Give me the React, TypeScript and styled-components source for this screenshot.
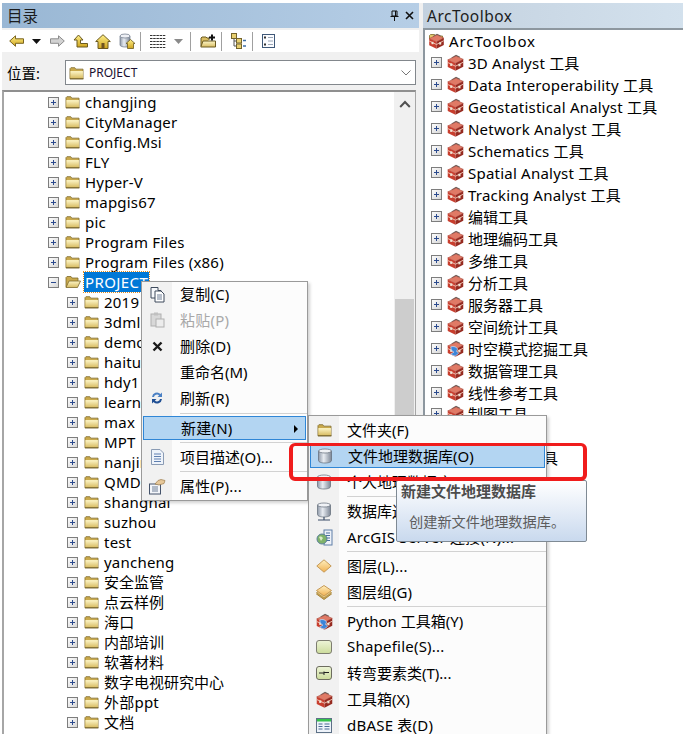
import React from "react";
import styled, { createGlobalStyle } from "styled-components";

const Global = createGlobalStyle`
  html, body { margin: 0; padding: 0; background: #fff; }
  * { box-sizing: border-box; }
`;

const FONT = `"Noto Sans", "Noto Sans CJK SC", sans-serif`;

const latinSpacing = (text: string) => (/[\u4e00-\u9fff]{3,}/.test(text) ? 0 : 0.22);

const Page = styled.div`
  position: relative;
  width: 683px;
  height: 734px;
  overflow: hidden;
  display: flex;
  background: #fff;
  padding: 3px 0 0 2px;
  font-family: ${FONT};
  font-size: 15px;
  color: #000;
`;
const LeftPane = styled.section`
  width: 421px;
  flex: none;
  display: flex;
  flex-direction: column;
  background: #f0f0f0;
  padding-right: 4px;
`;
const RightPane = styled.section`
  flex: 1;
  display: flex;
  flex-direction: column;
`;
const TitleBar = styled.header<{ $from: string; $to: string; $pad: number }>`
  height: 25px;
  flex: none;
  display: flex;
  align-items: center;
  padding: 0 5px 0 ${p => p.$pad}px;
  background: linear-gradient(90deg, ${p => p.$from}, ${p => p.$to});
  font-size: 15.5px;
  color: #1c1c1c;
`;
const TitleText = styled.span<{ $ls?: number }>`
  flex: 1;
  letter-spacing: ${p => p.$ls ?? 0}px;
`;
const TitleBtn = styled.svg`
  margin-left: 6px;
  flex: none;
`;
const Toolbar = styled.div`
  height: 22px;
  margin-top: 2px;
  flex: none;
  display: flex;
  align-items: center;
  background: #fff;
  padding-left: 7px;
`;
const ToolIcon = styled.svg<{ $ml?: number }>`
  flex: none;
  margin-left: ${p => p.$ml ?? 0}px;
`;
const ToolSep = styled.span<{ $ml: number }>`
  width: 1px;
  height: 19px;
  flex: none;
  margin-left: ${p => p.$ml}px;
  background: #a0a0a0;
`;
const LocationRow = styled.div`
  height: 38px;
  flex: none;
  display: flex;
  align-items: center;
  padding: 3px 3px 0 5px;
`;
const LocationLabel = styled.label`
  width: 58px;
  flex: none;
  font-size: 14.5px;
`;
const Combo = styled.div`
  flex: 1;
  height: 25px;
  display: flex;
  align-items: center;
  gap: 5px;
  padding: 0 4px 0 3px;
  background: #fff;
  border: 1px solid #82878c;
  font-size: 12px;
  color: #1a1030;
`;
const ComboText = styled.span`
  flex: 1;
`;
const TreePane = styled.div`
  flex: 1;
  min-height: 0;
  display: flex;
  background: #fff;
  border-top: 2px solid #8f8f8f;
  border-left: 2px solid #a6a6a6;
  border-right: 1px solid #a6a6a6;
  margin-right: 3px;
`;
const TreeList = styled.ul`
  flex: 1;
  margin: 0;
  padding: 0;
  list-style: none;
  min-width: 0;
`;
const TreeRow = styled.li<{ $level: number }>`
  height: 20px;
  display: flex;
  align-items: center;
  padding-left: ${p => 44 + p.$level * 19}px;
  white-space: nowrap;
`;
const Expander = styled.svg`
  flex: none;
`;
const RowFolder = styled.svg`
  flex: none;
  margin-left: 6px;
`;
const RowLabel = styled.span<{ $selected?: boolean; $ls: number }>`
  margin-left: ${p => (p.$selected ? 3 : 5)}px;
  line-height: 20px;
  padding: 0 ${p => (p.$selected ? 1 : 0)}px;
  letter-spacing: ${p => p.$ls}px;
  background: ${p => (p.$selected ? "#0078d7" : "transparent")};
  color: ${p => (p.$selected ? "#fff" : "#000")};
  outline: ${p => (p.$selected ? "1px dotted #e08a20" : "none")};
`;
const Scroll = styled.div`
  width: 21px;
  flex: none;
  background: #f0f0f0;
  display: flex;
  flex-direction: column;
  align-items: stretch;
`;
const ScrollArrow = styled.div`
  height: 24px;
  display: flex;
  align-items: center;
  justify-content: center;
`;
const ScrollThumb = styled.div`
  margin: 183px 1px 0;
  height: 420px;
  background: #cdcdcd;
`;
const ToolTreeFrame = styled.div`
  flex: 1;
  background: #fff;
  border-top: 2px solid #8d979f;
  border-left: 2px solid #8d979f;
`;
const ToolRoot = styled.div`
  height: 22px;
  display: flex;
  align-items: center;
  gap: 4px;
  padding-left: 3px;
`;
const RootLabel = styled.span`
  letter-spacing: 0.9px;
`;
const ToolRow = styled.div`
  height: 21.95px;
  display: flex;
  align-items: center;
  padding-left: 6px;
  white-space: nowrap;
`;
const ToolIconBox = styled.svg`
  flex: none;
  margin-left: 5px;
`;
const ToolLabel = styled.span<{ $ls: number }>`
  margin-left: 4px;
  letter-spacing: ${p => p.$ls}px;
`;
const Menu = styled.div<{ $left: number; $top: number; $width: number; $pad: number }>`
  position: absolute;
  left: ${p => p.$left}px;
  top: ${p => p.$top}px;
  width: ${p => p.$width}px;
  padding: ${p => p.$pad}px 0 1px;
  border: 1px solid #9a9a9a;
  background: linear-gradient(90deg, #f1f1f1 30px, #fcfcfc 30px);
  box-shadow: 2px 2px 3px rgba(0, 0, 0, 0.18);
`;
const MenuRow = styled.div<{ $active?: boolean; $disabled?: boolean; $h: number }>`
  position: relative;
  height: ${p => p.$h}px;
  display: flex;
  align-items: center;
  margin: ${p => (p.$active ? "1px 1px" : "0")};
  padding-left: ${p => (p.$active ? 4 : 5)}px;
  border: ${p => (p.$active ? "1px solid #2f86d6" : "none")};
  background: ${p => (p.$active ? "#b3d5f2" : "transparent")};
  color: ${p => (p.$disabled ? "#a8a8a8" : "#000")};
  white-space: nowrap;
`;
const MenuIconSlot = styled.span`
  width: 20px;
  height: 20px;
  flex: none;
  display: flex;
  align-items: center;
  justify-content: center;
`;
const MenuLabel = styled.span<{ $gap: number; $ls: number }>`
  margin: -2px 0 0 ${p => p.$gap}px;
  letter-spacing: ${p => p.$ls}px;
`;
const MenuSep = styled.div<{ $gap: number; $h: number }>`
  height: ${p => p.$h}px;
  margin-left: ${p => p.$gap}px;
  display: flex;
  align-items: center;
  &::before {
    content: "";
    flex: 1;
    height: 1px;
    background: #d2d2d2;
  }
`;
const SubArrow = styled.span`
  position: absolute;
  right: 7px;
  top: 8px;
  width: 0;
  height: 0;
  border-left: 4px solid #000;
  border-top: 4px solid transparent;
  border-bottom: 4px solid transparent;
`;
const Tip = styled.div`
  position: absolute;
  left: 396px;
  top: 480px;
  width: 191px;
  height: 62px;
  padding: 0 0 0 4px;
  border: 1px solid #7f8a94;
  border-radius: 2px;
  background: linear-gradient(180deg, #ffffff, #c9d9ee);
`;
const TipTitle = styled.div`
  font-size: 15px;
  font-weight: 700;
  color: #4c4c4c;
  line-height: 21px;
`;
const TipBody = styled.div`
  margin: 10px 0 0 8px;
  font-size: 14.2px;
  color: #5c5c5c;
  line-height: 20px;
  white-space: nowrap;
`;
const RedBox = styled.div`
  position: absolute;
  left: 289px;
  top: 443px;
  width: 298px;
  height: 38px;
  border: 4px solid #f01c1c;
  border-top-width: 3px;
  border-radius: 6px;
  pointer-events: none;
`;

const Defs = () => (
  <svg width="0" height="0" style={{ position: "absolute" }}>
    <defs>
      <linearGradient id="fold" x1="0" y1="0" x2="0" y2="1">
        <stop offset="0" stopColor="#fdf6c8" />
        <stop offset="1" stopColor="#d8bc62" />
      </linearGradient>
      <linearGradient id="db" x1="0" y1="0" x2="1" y2="0">
        <stop offset="0" stopColor="#8f99a8" />
        <stop offset="0.4" stopColor="#e8ecf2" />
        <stop offset="1" stopColor="#7d8796" />
      </linearGradient>
      <linearGradient id="btn" x1="0" y1="0" x2="1" y2="1">
        <stop offset="0" stopColor="#ffffff" />
        <stop offset="1" stopColor="#d4d4d4" />
      </linearGradient>
      <linearGradient id="diamond" x1="0" y1="0" x2="0" y2="1">
        <stop offset="0" stopColor="#fff0c0" />
        <stop offset="1" stopColor="#f0b050" />
      </linearGradient>
      <linearGradient id="shape" x1="0" y1="0" x2="0" y2="1">
        <stop offset="0" stopColor="#eef5d8" />
        <stop offset="1" stopColor="#ccdc9c" />
      </linearGradient>
      <linearGradient id="arrow" x1="0" y1="0" x2="0" y2="1">
        <stop offset="0" stopColor="#fff08a" />
        <stop offset="1" stopColor="#cfa41e" />
      </linearGradient>
    </defs>
  </svg>
);

const Plus = ({ minus }: { minus?: boolean }) => (
  <Expander width="11" height="11" viewBox="0 0 11 11">
    <rect x="0.5" y="0.5" width="10" height="10" fill="url(#btn)" stroke="#7d7d7d" />
    <path d={minus ? "M3 5.5h5" : "M3 5.5h5M5.5 3v5"} stroke="#2b4a8e" strokeWidth="1" />
  </Expander>
);

const FolderPaths = () => (
  <>
    <path d="M1 4V2.500L2 1.500h4l1 1.500h7.500V13H1z" fill="#c9a94c" stroke="#7d6a2c" strokeWidth="0.8" />
    <rect x="1.400" y="5" width="13" height="7.600" fill="url(#fold)" />
    <path d="M1 13h14" stroke="#6e5c26" strokeWidth="1" />
  </>
);
const Folder = () => (
  <RowFolder width="15" height="14" viewBox="0 0 15.5 14">
    <FolderPaths />
  </RowFolder>
);
const FolderOpen = () => (
  <RowFolder width="16" height="14" viewBox="0 0 16 14">
    <path d="M1 12V2.500L2 1.500h4l1 1.500h6v3" fill="#c9a94c" stroke="#7d6a2c" strokeWidth="0.8" />
    <path d="M1 12.500 4 6h11.500l-3 6.500z" fill="url(#fold)" stroke="#7d6a2c" strokeWidth="0.8" />
  </RowFolder>
);
const PlainFolder = () => (
  <svg width="15" height="14" viewBox="0 0 15.5 14" style={{ flex: "none" }}>
    <FolderPaths />
  </svg>
);

const ToolboxArt = ({ blue }: { blue?: boolean }) => (
  <>
    <path d="M4.500 3.800 8.500 1.500 12 3.200" fill="none" stroke="#6e6460" strokeWidth="1.300" />
    <path d="M.7 5.500 8.500 2l6.800 3L8 8.800z" fill="#e07a66" stroke="#a84a3c" strokeWidth="0.5" />
    <path d="M.7 5.500 8 8.800V15.700L.7 12.200z" fill="#c83e2e" />
    <path d="M8 8.800l7.300-3.800v7L8 15.700z" fill="#962a20" />
    <path d="M.7 8l7.300 3.500 7.300-3.800" fill="none" stroke="#f0c4b4" strokeWidth="0.9" />
    <rect x="3" y="8.800" width="2" height="2.400" fill="#f0e6d6" />
    <rect x="10.700" y="9.200" width="2" height="2.400" fill="#f0e6d6" />
    {blue && (
      <path d="M3.500 6.500c3-1 5.500 0 6.500 2l-1 2 2 2-3 2.500c-2 0-3.500-1-4.500-2l3-1.500-2.500-2z" fill="#3d85d8" stroke="#d6e8fb" strokeWidth="0.6" />
    )}
  </>
);
const Toolbox = ({ blue }: { blue?: boolean }) => (
  <ToolIconBox width="17" height="17" viewBox="0 0 16 16">
    <ToolboxArt blue={blue} />
  </ToolIconBox>
);
const MenuToolbox = ({ blue }: { blue?: boolean }) => (
  <svg width="17" height="17" viewBox="0 0 16 16">
    <ToolboxArt blue={blue} />
  </svg>
);

const Db = ({ net }: { net?: boolean }) => (
  <svg width="16" height={net ? 19 : 16} viewBox={net ? "0 0 16 19" : "0 0 16 16"}>
    <path d="M1.500 3v9.500c0 1.500 2.800 2.500 6.500 2.500s6.500-1 6.500-2.500V3z" fill="url(#db)" stroke="#5e6876" strokeWidth="0.7" />
    <ellipse cx="8" cy="3" rx="6.500" ry="2" fill="#f0f2f6" stroke="#5e6876" strokeWidth="0.7" />
    {net && <path d="M8 15v3M2 18h12" stroke="#3b4d68" strokeWidth="1.200" />}
  </svg>
);

const Up = () => (
  <svg width="12" height="10" viewBox="0 0 12 10">
    <path d="M1.200 8 6 3l4.800 5" fill="none" stroke="#505050" strokeWidth="2" />
  </svg>
);

type MenuItem =
  | { sep: true; h?: number }
  | { label: string; icon?: React.ReactNode; disabled?: boolean; active?: boolean; arrow?: boolean; h?: number };

const CopyIcon = () => (
  <svg width="15" height="17" viewBox="0 0 15 17">
    <path d="M1 1.500h7v3H11V12H1z" fill="#f5f7fa" stroke="#3e4a5c" />
    <path d="M5 5h6l3 3v8H5z" fill="#fff" stroke="#3e4a5c" />
    <path d="M7 9h5M7 11h5M7 13h5" stroke="#6f7f96" />
  </svg>
);
const PasteIcon = () => (
  <svg width="15" height="16" viewBox="0 0 15 16">
    <rect x="1" y="2" width="10" height="12" fill="#d8d8d8" stroke="#b0b0b0" />
    <rect x="4" y="0.500" width="4" height="3" fill="#c0c0c0" />
    <rect x="6" y="7" width="8" height="8" fill="#ececec" stroke="#b0b0b0" />
  </svg>
);
const DeleteIcon = () => (
  <svg width="11" height="11" viewBox="0 0 11 11">
    <path d="M1.500 1.500l8 8M9.500 1.500l-8 8" stroke="#1a1a1a" strokeWidth="2.400" />
  </svg>
);
const RefreshIcon = () => (
  <svg width="14" height="14" viewBox="0 0 14 14">
    <path d="M2 6a5 5 0 0 1 8.500-3L12 1.500V6H7.500l1.600-1.600A3 3 0 0 0 4 6z" fill="#4a80c4" />
    <path d="M12 8a5 5 0 0 1-8.500 3L2 12.500V8h4.500L4.900 9.600A3 3 0 0 0 10 8z" fill="#1f4f94" />
  </svg>
);
const DocIcon = () => (
  <svg width="13" height="16" viewBox="0 0 13 16">
    <path d="M.5.500H9L12.500 4V15.500H.5z" fill="#eef3fa" stroke="#8a9bb4" />
    <path d="M3 5h7M3 7.500h7M3 10h7M3 12.500h7" stroke="#5f7fb0" />
  </svg>
);
const PropsIcon = () => (
  <svg width="18" height="17" viewBox="0 0 18 17">
    <rect x="1.500" y="6" width="11" height="10" fill="#f4f6fa" stroke="#44536b" />
    <path d="M4 9h6M4 11h6M4 13h6" stroke="#6f7f96" />
    <path d="M7 6 10 2.500l3-1 4 1-1 3-5 1.500z" fill="#e7c89a" stroke="#9c7b4b" strokeWidth="0.7" />
  </svg>
);
const ConnIcon = () => (
  <svg width="17" height="17" viewBox="0 0 17 17">
    <rect x="8" y="1" width="8" height="15" fill="#eef2f8" stroke="#5f7fa8" />
    <path d="M10 4h4M10 6.500h4M10 9h4M10 11.500h4" stroke="#4a6fa0" />
    <circle cx="6" cy="10" r="5" fill="#7fb26a" stroke="#5a7f9a" />
    <path d="M3 8c2-1 3 0 4 1l-2 3z" fill="#d9ecc8" />
  </svg>
);
const LayerIcon = () => (
  <svg width="16" height="14" viewBox="0 0 16 14">
    <path d="M8 .8 15.200 7 8 13.200.8 7z" fill="url(#diamond)" stroke="#c69a58" />
  </svg>
);
const LayerGroupIcon = () => (
  <svg width="16" height="15" viewBox="0 0 16 15">
    <path d="M8 4 15.500 9 8 14.500.5 9z" fill="#c9a050" stroke="#a88840" />
    <path d="M8 2.800 15.500 7.600 8 13 .5 7.600z" fill="#e6c880" stroke="#b89850" />
    <path d="M8 .5 15.500 5.500 8 11 .5 5.500z" fill="url(#diamond)" stroke="#c69a58" />
  </svg>
);
const ShapeIcon = () => (
  <svg width="16" height="14" viewBox="0 0 16 14">
    <rect x=".5" y=".5" width="15" height="13" rx="2.500" fill="url(#shape)" stroke="#7d7d70" />
  </svg>
);
const TurnIcon = () => (
  <svg width="16" height="14" viewBox="0 0 16 14">
    <rect x=".5" y=".5" width="15" height="13" rx="2.500" fill="url(#shape)" stroke="#6d6d60" />
    <path d="M3 7h5M8 5.500V9M8 6.500h5" stroke="#222" strokeWidth="1" />
  </svg>
);
const TableIcon = () => (
  <svg width="16" height="15" viewBox="0 0 16 15">
    <rect x=".5" y=".5" width="15" height="14" fill="#eef3fa" stroke="#5d7187" />
    <rect x="1" y="1" width="14" height="2.500" fill="#33c24a" />
    <path d="M2.500 6h4M2.500 8.500h4M2.500 11h4M8.500 6h5M8.500 8.500h5M8.500 11h5" stroke="#4a6a94" />
  </svg>
);

const contextMenu: MenuItem[] = [
  { label: "复制(C)", icon: <CopyIcon />, h: 25 },
  { label: "粘贴(P)", icon: <PasteIcon /> , disabled: true },
  { label: "删除(D)", icon: <DeleteIcon /> },
  { label: "重命名(M)" },
  { label: "刷新(R)", icon: <RefreshIcon /> },
  { sep: true, h: 4 },
  { label: "新建(N)", active: true, arrow: true },
  { sep: true },
  { label: "项目描述(O)...", icon: <DocIcon /> },
  { sep: true },
  { label: "属性(P)...", icon: <PropsIcon /> },
];
const newMenu: MenuItem[] = [
  { label: "文件夹(F)", icon: <PlainFolder /> },
  { label: "文件地理数据库(O)", icon: <Db />, active: true },
  { label: "个人地理数据库(P)", icon: <Db /> },
  { sep: true },
  { label: "数据库连接(D)...", icon: <Db net /> },
  { label: "ArcGIS Server 连接(N)...", icon: <ConnIcon /> },
  { sep: true },
  { label: "图层(L)...", icon: <LayerIcon /> },
  { label: "图层组(G)", icon: <LayerGroupIcon /> },
  { sep: true },
  { label: "Python 工具箱(Y)", icon: <MenuToolbox blue /> },
  { label: "Shapefile(S)...", icon: <ShapeIcon /> },
  { label: "转弯要素类(T)...", icon: <TurnIcon /> },
  { label: "工具箱(X)", icon: <MenuToolbox /> },
  { label: "dBASE 表(D)", icon: <TableIcon /> },
];

const MenuList = ({ items, gap }: { items: MenuItem[]; gap: number }) => (
  <>
    {items.map((it, i) =>
      "sep" in it ? (
        <MenuSep key={i} $gap={gap + 25} $h={it.h ?? 3} />
      ) : (
        <MenuRow key={it.label} $active={it.active} $disabled={it.disabled} $h={it.h ?? (it.active ? 24 : 26)}>
          <MenuIconSlot>{it.icon}</MenuIconSlot>
          <MenuLabel $gap={gap} $ls={latinSpacing(it.label)}>{it.label}</MenuLabel>
          {it.arrow && <SubArrow />}
        </MenuRow>
      )
    )}
  </>
);

const level0 = ["changjing", "CityManager", "Config.Msi", "FLY", "Hyper-V", "mapgis67", "pic", "Program Files", "Program Files (x86)"];
const level1 = ["2019", "3dml", "demo", "haitu", "hdy1", "learn", "max", "MPT", "nanjing", "QMD", "shanghai", "suzhou", "test", "yancheng", "安全监管", "点云样例", "海口", "内部培训", "软著材料", "数字电视研究中心", "外部ppt", "文档"];
const tools = ["3D Analyst 工具", "Data Interoperability 工具", "Geostatistical Analyst 工具", "Network Analyst 工具", "Schematics 工具", "Spatial Analyst 工具", "Tracking Analyst 工具", "编辑工具", "地理编码工具", "多维工具", "分析工具", "服务器工具", "空间统计工具", "时空模式挖掘工具", "数据管理工具", "线性参考工具", "制图工具", "转换工具", "追踪分析工具"];

export default function App() {
  return (
    <Page>
      <Global />
      <Defs />
      <LeftPane>
        <TitleBar $from="#99b7d4" $to="#b6cee6" $pad={5}>
          <TitleText>目录</TitleText>
          <TitleBtn width="9" height="11" viewBox="0 0 9 11">
            <path d="M2 1h5v5H2zM0.500 6.500h8M4.500 6.500V11M5.500 1v5" fill="none" stroke="#111" />
          </TitleBtn>
          <TitleBtn width="9" height="9" viewBox="0 0 9 9">
            <path d="M1 1l7 7M8 1l-7 7" stroke="#111" strokeWidth="1.600" />
          </TitleBtn>
        </TitleBar>
        <Toolbar>
          <ToolIcon width="15" height="12" viewBox="0 0 15 12">
            <path d="M.7 6 6.500.8v3h8v4.500h-8v3z" fill="url(#arrow)" stroke="#7a6420" />
          </ToolIcon>
          <ToolIcon $ml={8} width="9" height="5" viewBox="0 0 9 5">
            <path d="M0 0h9L4.500 5z" fill="#111" />
          </ToolIcon>
          <ToolIcon $ml={9} width="15" height="12" viewBox="0 0 15 12">
            <path d="M14.300 6 8.500.8v3h-8v4.500h8v3z" fill="#d2d2d2" stroke="#8c8c8c" />
          </ToolIcon>
          <ToolIcon $ml={8} width="15" height="14" viewBox="0 0 15 14">
            <path d="M1 6 5.500 1 10 6H7.500v3.500h7v3.500H4V6z" fill="url(#arrow)" stroke="#6b5a20" />
          </ToolIcon>
          <ToolIcon $ml={7} width="16" height="15" viewBox="0 0 16 15">
            <path d="M8 .7.700 7.500h2.300V14.500h10V7.500h2.300z" fill="url(#arrow)" stroke="#6b5a20" />
            <rect x="6.500" y="9" width="3" height="5.500" fill="#6e5320" />
          </ToolIcon>
          <ToolIcon $ml={8} width="16" height="16" viewBox="0 0 16 16">
            <path d="M1 3v9c0 1 2 2 5 2h5V3z" fill="url(#db)" stroke="#6c7686" strokeWidth="0.7" />
            <ellipse cx="6" cy="3" rx="5" ry="2" fill="#eef0f5" stroke="#6c7686" strokeWidth="0.7" />
            <path d="M11.500 6.500 7 10.500h1.500v5h6v-5H16z" fill="url(#arrow)" stroke="#6b5a20" strokeWidth="0.8" />
          </ToolIcon>
          <ToolSep $ml={5} />
          <ToolIcon $ml={9} width="16" height="15" viewBox="0 0 16 15">
            <path d="M0 1.500h16M0 4.500h16M0 7.500h16M0 10.500h16M0 13.500h16" stroke="#333" strokeDasharray="2.500 .7" />
          </ToolIcon>
          <ToolIcon $ml={8} width="9" height="5" viewBox="0 0 9 5">
            <path d="M0 0h9L4.500 5z" fill="#8a8a8a" />
          </ToolIcon>
          <ToolSep $ml={7} />
          <ToolIcon $ml={9} width="16" height="14" viewBox="0 0 16 14">
            <path d="M1 12V4l1-1h4l1 1h2v2" fill="#d9bd62" stroke="#6b5a20" />
            <path d="M.8 13 3 7h12.500v6z" fill="url(#fold)" stroke="#6b5a20" />
            <path d="M9 3.500h6M12 .5v6" stroke="#111" strokeWidth="2" />
          </ToolIcon>
          <ToolSep $ml={5} />
          <ToolIcon $ml={9} width="15" height="16" viewBox="0 0 15 16">
            <rect x=".5" y=".5" width="5" height="5" fill="#e8d070" stroke="#75642a" />
            <rect x="5.500" y="5.500" width="5" height="4.500" fill="#e8d070" stroke="#75642a" />
            <rect x="5.500" y="11" width="5" height="4.500" fill="#e8d070" stroke="#75642a" />
            <path d="M3 5.500V13h2.500M3 8h2.500" fill="none" stroke="#555" />
            <path d="M12 7.500h3M12 13h3" stroke="#3d6ea5" strokeWidth="1.500" />
          </ToolIcon>
          <ToolSep $ml={6} />
          <ToolIcon $ml={9} width="13" height="14" viewBox="0 0 13 14">
            <rect x=".5" y=".5" width="12" height="13" fill="#fbfcff" stroke="#3f5878" />
            <path d="M6 3.500h5M6 7h5M6 10.500h5" stroke="#9aa5b4" />
            <rect x="2" y="2.500" width="2" height="2" fill="#333" />
            <rect x="2" y="9.500" width="2" height="2" fill="#333" />
          </ToolIcon>
        </Toolbar>
        <LocationRow>
          <LocationLabel>位置:</LocationLabel>
          <Combo>
            <PlainFolder />
            <ComboText>PROJECT</ComboText>
            <svg width="10" height="6" viewBox="0 0 10 6">
              <path d="M.5.500 5 5 9.500.500" fill="none" stroke="#777" />
            </svg>
          </Combo>
        </LocationRow>
        <TreePane>
          <TreeList>
            {level0.map(n => (
              <TreeRow key={n} $level={0}>
                <Plus />
                <Folder />
                <RowLabel $ls={latinSpacing(n)}>{n}</RowLabel>
              </TreeRow>
            ))}
            <TreeRow $level={0}>
              <Plus minus />
              <FolderOpen />
              <RowLabel $selected $ls={0.4}>PROJECT</RowLabel>
            </TreeRow>
            {level1.map(n => (
              <TreeRow key={n} $level={1}>
                <Plus />
                <Folder />
                <RowLabel $ls={latinSpacing(n)}>{n}</RowLabel>
              </TreeRow>
            ))}
          </TreeList>
          <Scroll>
            <ScrollArrow>
              <Up />
            </ScrollArrow>
            <ScrollThumb />
          </Scroll>
        </TreePane>
      </LeftPane>
      <RightPane>
        <TitleBar $from="#c3d1df" $to="#d3e1ed" $pad={4}>
          <TitleText $ls={0.5}>ArcToolbox</TitleText>
        </TitleBar>
        <ToolTreeFrame>
          <ToolRoot>
            <svg width="17" height="16" viewBox="0 0 16 16">
              <path d="M1 6V2.500L2 1.500h4l1 1.500h7v4" fill="#e3c86c" stroke="#7d6a2c" strokeWidth="0.8" />
              <ToolboxArt />
            </svg>
            <RootLabel>ArcToolbox</RootLabel>
          </ToolRoot>
          {tools.map((t, i) => (
            <ToolRow key={t}>
              <Plus />
              <Toolbox blue={i === 13} />
              <ToolLabel $ls={latinSpacing(t)}>{t}</ToolLabel>
            </ToolRow>
          ))}
        </ToolTreeFrame>
      </RightPane>
      <Menu $left={141} $top={281} $width={167} $pad={0}>
        <MenuList items={contextMenu} gap={13} />
      </Menu>
      <Menu $left={308} $top={415} $width={239} $pad={1}>
        <MenuList items={newMenu} gap={13} />
      </Menu>
      <Tip>
        <TipTitle>新建文件地理数据库</TipTitle>
        <TipBody>创建新文件地理数据库。</TipBody>
      </Tip>
      <RedBox />
    </Page>
  );
}
